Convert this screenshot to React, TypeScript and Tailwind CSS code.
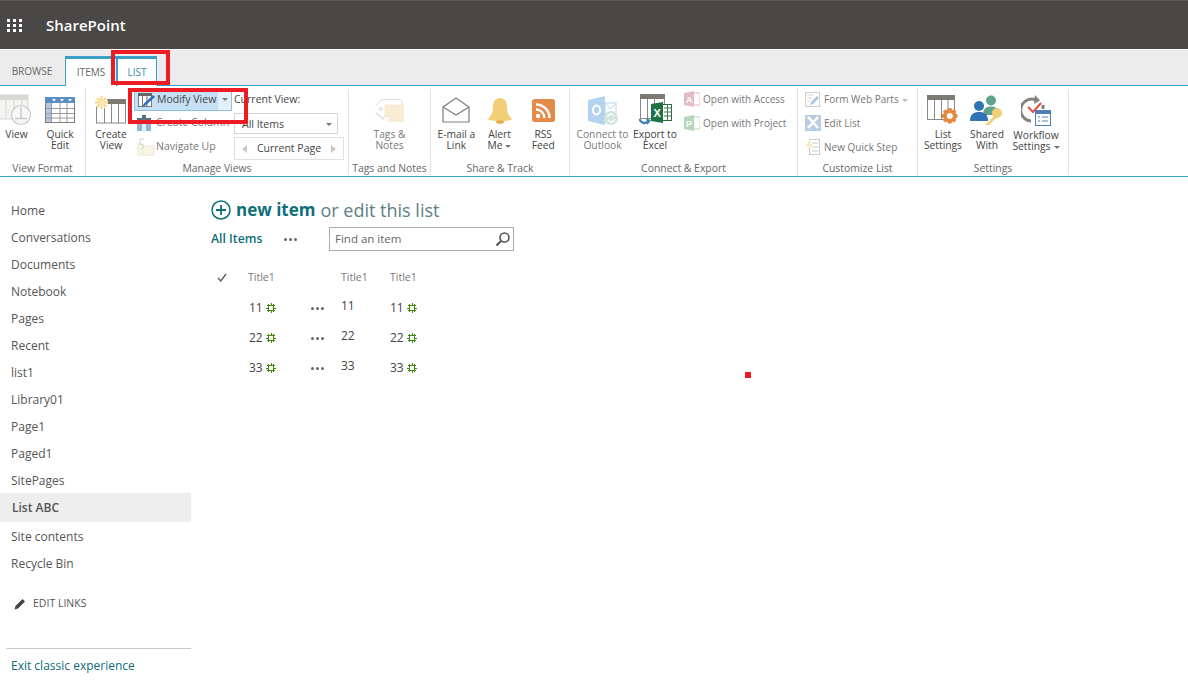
import React from "react";

const F = "font-['Open_Sans','Noto_Sans',sans-serif]";

function Caret({ className = "" }: { className?: string }) {
  return <span className={"inline-block w-0 h-0 border-l-[3px] border-r-[3px] border-t-[3px] border-l-transparent border-r-transparent border-t-[#777] " + className} />;
}

const icons: Record<string, React.ReactNode> = {
  view: (
    <svg width="34" height="32" viewBox="0 0 34 32">
      <rect x="-2" y="1" width="30" height="24" fill="#f4f4f3" stroke="#d8d7d4" />
      <rect x="-2" y="1" width="30" height="5" fill="#d8d7d4" />
      <path d="M6 6V25M14 6V25M22 6V25" stroke="#d8d7d4" />
      <circle cx="21" cy="21" r="9.5" fill="#f7f7f7" stroke="#c9c8c5" strokeWidth="1.2" />
      <path d="M21 13V24M15 24.5H27" stroke="#c9c8c5" strokeWidth="1.4" />
    </svg>
  ),
  quick: (
    <svg width="30" height="26" viewBox="0 0 30 26">
      <rect x="0.5" y="0.5" width="29" height="25" fill="#fff" stroke="#7e7e7e" />
      <rect x="0" y="0" width="30" height="6" fill="#5b8fc4" />
      <rect x="1" y="6" width="5" height="19" fill="#b4c7e4" />
      <path d="M1 11.5H29M1 16.5H29M1 21H29M6.5 6V25M15 6V25M22 6V25" stroke="#9a9a9a" />
      <path d="M7 2h4l-2 2.5zM15 2h4l-2 2.5zM23 2h4l-2 2.5z" fill="#fff" />
    </svg>
  ),
  create: (
    <svg width="32" height="28" viewBox="0 0 32 28">
      <rect x="1.5" y="3.5" width="29" height="23.500" fill="#fff" stroke="#8b8981" />
      <rect x="1" y="3" width="30" height="5" fill="#7b7971" />
      <path d="M9.5 8V27M16.5 8V27M23.5 8V27" stroke="#8b8981" />
      <circle cx="6.500" cy="6.500" r="6.500" fill="#fff" />
      <path d="M6.500 0V13M0 6.500H13M2 2L11 11M11 2L2 11" stroke="#f6d47e" strokeWidth="1.800" />
      <circle cx="6.500" cy="6.500" r="3" fill="#fbe7b0" />
    </svg>
  ),
  tags: (
    <svg width="32" height="25" viewBox="0 0 32 27">
      <path d="M0.5 8.5L7 1.5H26.5C28 1.5 29 2.5 29 4V7M10 22.5H7L0.5 15.5Z" fill="#fff" stroke="#d9d8d5" />
      <circle cx="6" cy="12" r="1.6" fill="none" stroke="#d0cfcc" />
      <path d="M10 7H31V26H16L10 20Z" fill="#f9ecd2" />
      <path d="M10 20H16V26Z" fill="#fff" stroke="#f1e3c5" />
    </svg>
  ),
  mail: (
    <svg width="28" height="26" viewBox="0 0 28 26">
      <path d="M1 10L14 1 27 10V25H1Z" fill="#fff" stroke="#7e7d78" strokeWidth="1.2" />
      <path d="M1 10L14 18 27 10" fill="none" stroke="#7e7d78" strokeWidth="1.2" />
    </svg>
  ),
  bell: (
    <svg width="26" height="27" viewBox="0 0 26 27">
      <path d="M13 1C8 1 6 5 6 10C6 16 4 19 1 21.5C1 23 4 24 13 24C22 24 25 23 25 21.5C22 19 20 16 20 10C20 5 18 1 13 1Z" fill="#f2cf77" />
      <ellipse cx="13" cy="25" rx="4" ry="1.8" fill="#e9a94f" />
    </svg>
  ),
  rss: (
    <svg width="23" height="23" viewBox="0 0 23 23">
      <rect width="23" height="23" rx="2.5" fill="#e68a4a" />
      <circle cx="6" cy="17" r="2.2" fill="#fff" />
      <path d="M4 10.5A8.500 8.500 0 0 1 12.500 19M4 5.500A13.500 13.500 0 0 1 17.500 19" fill="none" stroke="#fff" strokeWidth="2.4" />
    </svg>
  ),
  outlook: (
    <svg width="30" height="31" viewBox="0 0 30 31">
      <path d="M0 5L17 1V30L0 26Z" fill="#b3d3ee" />
      <rect x="17" y="8" width="11" height="11" fill="#fff" stroke="#b3d3ee" />
      <path d="M17 8L22.500 14 28 8" fill="none" stroke="#b3d3ee" />
      <ellipse cx="8.500" cy="15" rx="3.600" ry="4.500" fill="none" stroke="#fff" strokeWidth="2" />
      <circle cx="23" cy="23" r="7" fill="#d2e4de" />
      <path d="M19.500 22a3.500 3.500 0 0 1 6.500-1M26.500 24a3.500 3.500 0 0 1-6.500 1" fill="none" stroke="#fff" strokeWidth="1.300" />
    </svg>
  ),
  excel: (
    <svg width="33" height="32" viewBox="0 0 33 32">
      <rect x="1.500" y="0.500" width="24" height="24" fill="#fff" stroke="#8b8981" />
      <rect x="1" y="0" width="25" height="5" fill="#7b7971" />
      <path d="M8.500 5V25M15.500 5V25" stroke="#8b8981" />
      <rect x="20.500" y="10.500" width="12" height="16" fill="#fff" stroke="#2a6b3f" />
      <path d="M25 14H32M25 18H32M25 22H32M28.500 11V26" stroke="#3b8052" />
      <path d="M12 10L24 8V29L12 27Z" fill="#1f7244" />
      <text x="14.500" y="23" fill="#fff" fontSize="11" fontWeight="700" fontFamily="Liberation Sans">X</text>
      <path d="M0 25C3 30 7 30 10 27" fill="none" stroke="#3f7fbf" strokeWidth="2.400" />
      <path d="M7 24.500L12 26 8.500 31Z" fill="#3f7fbf" />
    </svg>
  ),
  access: (
    <svg width="16" height="16" viewBox="0 0 16 16">
      <rect x="8" y="2" width="8" height="12" fill="#fff" stroke="#e0b7c3" />
      <path d="M0 2L10 0V16L0 14Z" fill="#e3bcc8" />
      <text x="2" y="12" fill="#fff" fontSize="9" fontWeight="700" fontFamily="Liberation Sans">A</text>
    </svg>
  ),
  project: (
    <svg width="16" height="16" viewBox="0 0 16 16">
      <rect x="8" y="2" width="8" height="12" fill="#fff" stroke="#bcd9c0" />
      <path d="M0 2L10 0V16L0 14Z" fill="#b7d6bb" />
      <text x="2" y="12" fill="#fff" fontSize="9" fontWeight="700" fontFamily="Liberation Sans">P</text>
    </svg>
  ),
  modify: (
    <svg width="17" height="16" viewBox="0 0 17 16">
      <rect x="0.500" y="1.500" width="13" height="13" fill="#fff" stroke="#777" />
      <rect x="0" y="1" width="14" height="3" fill="#666" />
      <path d="M4.500 4V15M9 4V15" stroke="#777" />
      <path d="M15 3L6 11.500 4 15 7.500 13.500 17 5Z" fill="#2a72b5" />
    </svg>
  ),
  column: (
    <svg width="14" height="16" viewBox="0 0 14 16">
      <rect x="0" y="3" width="14" height="13" fill="#8fb6d6" />
      <rect x="5" y="3" width="4" height="13" fill="#e6eff6" />
      <rect x="0" y="3" width="14" height="3" fill="#5c6f80" />
      <rect x="5" y="0" width="4" height="3" fill="#5c6f80" />
    </svg>
  ),
  navup: (
    <svg width="18" height="18" viewBox="0 0 18 18">
      <path d="M0 6H6L8 8H17V17H0Z" fill="#faf4e4" stroke="#eee9da" />
      <path d="M3 1H7M3 1V6M3 6C7 6 7 11 4 11" fill="none" stroke="#d3e4d1" strokeWidth="1.300" />
    </svg>
  ),
  webparts: (
    <svg width="15" height="15" viewBox="0 0 15 15">
      <rect x="0.500" y="0.500" width="14" height="14" fill="#fff" stroke="#cfcfcf" />
      <path d="M2 3H9M2 6H7M2 9H5" stroke="#d6d6d6" />
      <path d="M12 4L6 10 5 13 8 12 14 6Z" fill="#a9c6e0" />
    </svg>
  ),
  edit: (
    <svg width="16" height="16" viewBox="0 0 16 16">
      <rect width="16" height="16" fill="#b9cde3" />
      <path d="M3 2L13 13M13 2L3 13" stroke="#fff" strokeWidth="2.600" />
    </svg>
  ),
  quickstep: (
    <svg width="15" height="16" viewBox="0 0 15 16">
      <rect x="4.500" y="0.500" width="10" height="15" fill="#fff" stroke="#c9c9c9" />
      <path d="M7 4H13M7 8H13M7 12H13" stroke="#c9c9c9" />
      <path d="M5 0L1 7H4L2 13 8 5H5Z" fill="#f9e5bb" />
    </svg>
  ),
  listset: (
    <svg width="31" height="31" viewBox="0 0 31 31">
      <rect x="0.500" y="0.500" width="27" height="24" fill="#fff" stroke="#8b8981" />
      <rect x="0" y="0" width="28" height="5" fill="#7b7971" />
      <path d="M7.500 5V25M14.500 5V25M21 5V25" stroke="#8b8981" />
      <path d="M21 13h3.500l.6 2.200 2-.9 2.300 2.300-1 2 2.100.6v3.400l-2.100.6 1 2-2.300 2.300-2-1-.6 2.100H21l-.6-2.100-2 1-2.400-2.300 1-2-2-.6v-3.400l2-.6-1-2 2.400-2.300 2 .9z" fill="#e38a3e" />
      <circle cx="22.800" cy="21" r="3" fill="#fff" />
    </svg>
  ),
  shared: (
    <svg width="34" height="31" viewBox="0 0 34 31">
      <circle cx="21" cy="5.500" r="5" fill="#5fa28e" />
      <path d="M13 20C13 13 17 11.500 21 11.500S29 13 29 20Z" fill="#5fa28e" />
      <circle cx="9" cy="11" r="5" fill="#2f75b5" />
      <path d="M0 26C0 19 4 17 9 17S18 19 18 26Z" fill="#2f75b5" />
      <circle cx="27" cy="18" r="5" fill="#f2cf77" />
      <path d="M24 21L15 30H19L27 22Z" fill="#f2cf77" />
    </svg>
  ),
  workflow: (
    <svg width="30" height="31" viewBox="0 0 30 31">
      <path d="M17 6A11 11 0 1 0 10 26" fill="none" stroke="#85827b" strokeWidth="3" />
      <path d="M14 0L19 5.500 13 9Z" fill="#85827b" />
      <path d="M7 12L12 17 20 8" fill="none" stroke="#e5533d" strokeWidth="2" />
      <rect x="14.500" y="15.500" width="15" height="15" fill="#fff" stroke="#4c7fb5" />
      <rect x="14" y="15" width="16" height="4" fill="#4c7fb5" />
      <path d="M17 22H19M21 22H27M17 26H19M21 26H27" stroke="#4c7fb5" />
      <path d="M22 10V14" stroke="#85827b" strokeWidth="3" />
    </svg>
  ),
};

function Big({ icon, lines, dim, caret, iconH = 35 }: { icon: string; lines: string[]; dim?: boolean; caret?: boolean; iconH?: number }) {
  return (
    <div className={"flex flex-col items-center text-[10.25px] leading-[11px] text-center " + (dim ? "text-[#7a7a7a]" : "text-[#444]")}>
      <div style={{ height: iconH }} className="flex items-center justify-center pb-[3px]">{icons[icon]}</div>
      <div className="whitespace-nowrap">
        {lines.map((l, i) => (
          <React.Fragment key={i}>
            {i > 0 && <br />}
            {l}
          </React.Fragment>
        ))}
        {caret && <Caret className="ml-[3px] mb-[1px]" />}
      </div>
    </div>
  );
}

function Small({ icon, label, caret, narrow, className = "" }: { icon: string; label: string; caret?: boolean; narrow?: boolean; className?: string }) {
  return (
    <div className={"flex items-center h-6 whitespace-nowrap text-[#767676] " + (narrow ? "text-[10px] " : "text-[10.5px] ") + className}>
      <span className="w-[19px] flex items-center justify-start">{icons[icon]}</span>
      {label}
      {caret && <Caret className="ml-[3px] mt-[2px] !border-t-[#bbb]" />}
    </div>
  );
}

function Group({ title, w, children, className = "" }: { title: string; w: number; children: React.ReactNode; className?: string }) {
  return (
    <div style={{ width: w }} className="shrink-0 flex flex-col h-[86px] mt-[3px] border-r border-[#e1e1e1]">
      <div className={"flex-1 min-h-0 " + className}>{children}</div>
      <div className="h-[14px] text-center text-[10.4px] leading-[14px] text-[#666] whitespace-nowrap">{title}</div>
    </div>
  );
}

function Star() {
  return (
    <svg width="10" height="10" viewBox="0 0 10 10" className="ml-[3px]" shapeRendering="crispEdges">
      <path d="M2.500 1V9M7.500 1V9M1 2.500H9M1 7.500H9M5 0V3M5 7V10M0 5H3M7 5H10" stroke="#3f8a0c" strokeWidth="1" fill="none" />
    </svg>
  );
}

function Dots() {
  return (
    <span className="inline-flex gap-[2px]">
      <i className="w-[3px] h-[3px] rounded-full bg-[#666]" />
      <i className="w-[3px] h-[3px] rounded-full bg-[#666]" />
      <i className="w-[3px] h-[3px] rounded-full bg-[#666]" />
    </span>
  );
}

const nav = ["Home", "Conversations", "Documents", "Notebook", "Pages", "Recent", "list1", "Library01", "Page1", "Paged1", "SitePages"];

export default function App() {
  return (
    <div className={F + " relative w-[1188px] h-[680px] overflow-hidden bg-white"}>
      {/* Suite bar */}
      <div className="h-[49px] mb-[1px] bg-[#4a4846] border-t border-[#5c5a58] flex items-center">
        <div className="w-[46px] pl-[7px]">
          <div className="grid grid-cols-3 gap-x-[3px] gap-y-[2px] w-[15px]">
            {Array.from({ length: 9 }).map((_, i) => (
              <i key={i} className="w-[3px] h-[3px] bg-white" />
            ))}
          </div>
        </div>
        <span className="text-white text-[15px] font-semibold">SharePoint</span>
      </div>

      {/* Tabs */}
      <div className="h-[36px] bg-[#ececec] border-b border-[#3aa0c9] flex items-end pl-[1px] text-[10px] text-[#666]">
        <div className="w-[64px] h-[29px] pr-[2px] flex items-center justify-center mb-[-1px]">BROWSE</div>
        <div className="w-[52px] h-[30px] flex items-center justify-center border-t-[3px] border-x border-[#3aa0c9] bg-white mb-[-1px]">ITEMS</div>
        <div className="w-[40px] h-[30px] flex items-center justify-center border-t-[3px] border-x border-[#3aa0c9] border-b border-b-white bg-white text-[#3a8bb5] mb-[-1px]">LIST</div>
      </div>

      {/* Ribbon */}
      <div className="h-[91px] border-b border-[#3aa0c9] flex overflow-hidden">
        <Group title="View Format" w={86} className="flex pt-[5px]">
          <div className="w-[33px] flex justify-center overflow-hidden"><Big icon="view" lines={["View"]} /></div>
          <div className="flex-1 flex justify-center pl-[2px]"><Big icon="quick" lines={["Quick", "Edit"]} /></div>
        </Group>
        <Group title="Manage Views" w={263} className="flex pt-[5px]">
          <div className="w-[50px] flex justify-center"><Big icon="create" lines={["Create", "View"]} /></div>
          <div className="w-[98px] -ml-[2px] -mt-[6px]">
            <div className="flex items-center h-[23px] w-[98px] border border-[#92c0e0] bg-[#c5e0f5] text-[10.5px] text-[#444] whitespace-nowrap">
              <span className="ml-[3px] w-[19px]">{icons.modify}</span>Modify View
              <span className="ml-auto w-[13px] h-full bg-[#e4f0fa] flex items-center justify-center"><Caret /></span>
            </div>
            <Small icon="column" label="Create Column" className="ml-[3px]" />
            <Small icon="navup" label="Navigate Up" className="ml-[3px]" />
          </div>
          <div className="w-[110px] ml-[2px] text-[10.5px] text-[#444] -mt-[6px]">
            <div className="h-[22px] pt-[1px] flex items-center">Current View:</div>
            <div className="h-[21px] w-[104px] border border-[#d5d5d5] flex items-center pl-[7px] pt-[2px] mt-[3px]">
              All Items<Caret className="ml-auto mr-[5px]" />
            </div>
            <div className="h-[23px] w-[110px] border border-[#e0e0e0] flex items-center justify-between px-[7px] mt-[3px]">
              <span className="w-0 h-0 border-y-[4px] border-r-[5px] border-y-transparent border-r-[#c8c8c8]" />
              <span>Current Page</span>
              <span className="w-0 h-0 border-y-[4px] border-l-[5px] border-y-transparent border-l-[#c8c8c8]" />
            </div>
          </div>
        </Group>
        <Group title="Tags and Notes" w={82} className="flex justify-center pt-[5px]">
          <Big icon="tags" lines={["Tags &", "Notes"]} dim />
        </Group>
        <Group title="Share & Track" w={139} className="flex pt-[5px]">
          <div className="w-[51px] flex justify-center"><Big icon="mail" lines={["E-mail a", "Link"]} /></div>
          <div className="w-[36px] flex justify-center"><Big icon="bell" lines={["Alert", "Me"]} caret /></div>
          <div className="w-[52px] flex justify-center"><Big icon="rss" lines={["RSS", "Feed"]} /></div>
        </Group>
        <Group title="Connect & Export" w={228} className="flex pt-[5px]">
          <div className="w-[65px] flex justify-center"><Big icon="outlook" lines={["Connect to", "Outlook"]} dim /></div>
          <div className="w-[40px] flex justify-center"><Big icon="excel" lines={["Export to", "Excel"]} /></div>
          <div className="ml-[9px] -mt-[7px]">
            <Small icon="access" label="Open with Access" narrow />
            <Small icon="project" label="Open with Project" narrow />
          </div>
        </Group>
        <Group title="Customize List" w={120} className="pl-[7px] -mt-[2px]">
          <Small icon="webparts" label="Form Web Parts" caret narrow />
          <Small icon="edit" label="Edit List" narrow />
          <Small icon="quickstep" label="New Quick Step" narrow />
        </Group>
        <Group title="Settings" w={151} className="flex pt-[5px]">
          <div className="w-[50px] flex justify-center"><Big icon="listset" lines={["List", "Settings"]} /></div>
          <div className="w-[38px] flex justify-center"><Big icon="shared" lines={["Shared", "With"]} /></div>
          <div className="w-[60px] flex justify-center"><Big icon="workflow" lines={["Workflow", "Settings"]} caret iconH={36} /></div>
        </Group>
      </div>

      {/* Body */}
      <div className="flex">
        <nav className="w-[191px] shrink-0 pt-[20px] text-[12px] text-[#555]">
          {nav.map((n) => (
            <div key={n} className="h-[27px] pl-[11px] flex items-center">{n}</div>
          ))}
          <div className="h-[29px] mt-[-1px] bg-[#eeeeee] pl-[12px] flex items-center font-semibold text-[#555]">List ABC</div>
          <div className="h-[27px] pl-[11px] flex items-center mt-[1px]">Site contents</div>
          <div className="h-[27px] pl-[11px] flex items-center">Recycle Bin</div>
          <div className="h-[27px] mt-[13px] pl-[14px] flex items-center text-[10.5px] text-[#555]">
            <svg width="12" height="12" viewBox="0 0 12 12" className="mr-[7px]">
              <path d="M0.500 11.500L1.500 8 8.500 1 11 3.500 4 10.500Z" fill="#444" />
            </svg>
            EDIT LINKS
          </div>
          <div className="ml-[6px] mt-[31px] border-t border-[#c8c8c8] h-[35px] pl-[5px] flex items-center text-[#0f6b78]">Exit classic experience</div>
        </nav>

        <main className="pl-[20px] pt-[20px]">
          <div className="flex items-center h-[26px]">
            <svg width="20" height="20" viewBox="0 0 20 20">
              <circle cx="10" cy="10" r="9" fill="none" stroke="#0f6f78" strokeWidth="1.500" />
              <path d="M10 5V15M5 10H15" stroke="#0f6f78" strokeWidth="1.800" />
            </svg>
            <span className="ml-[5px] text-[17px] font-bold text-[#0f6f78]">new item</span>
            <span className="ml-[5px] text-[18px] text-[#5a7f86]">or edit this list</span>
          </div>
          <div className="flex items-center mt-[4px] h-[24px]">
            <span className="text-[12.25px] font-semibold text-[#0f6f78] w-[73px]">All Items</span>
            <Dots />
            <div className="ml-[32px] w-[185px] h-[24px] border border-[#ababab] flex items-center pl-[5px] pr-[2px] text-[11.5px] text-[#666]">
              Find an item
              <svg width="16" height="16" viewBox="0 0 16 16" className="ml-auto">
                <circle cx="9.500" cy="6.500" r="4.500" fill="none" stroke="#555" strokeWidth="1.600" />
                <path d="M6 10L1.500 14.500" stroke="#555" strokeWidth="2.200" />
              </svg>
            </div>
          </div>
          <div className="grid grid-cols-[37px_63px_30px_49px_60px] mt-[12px] text-[12px] text-[#444] items-center">
            <div className="h-[30px] flex items-center pl-[6px] -mt-[2px]">
              <svg width="10" height="9" viewBox="0 0 10 9"><path d="M1 5L3.800 8 9 1" fill="none" stroke="#666" strokeWidth="1.500" /></svg>
            </div>
            <div className="h-[30px] flex items-center text-[10.5px] text-[#777]">Title1</div>
            <div />
            <div className="h-[30px] flex items-center text-[10.5px] text-[#777]">Title1</div>
            <div className="h-[30px] flex items-center text-[10.5px] text-[#777]">Title1</div>
            {["11", "22", "33"].map((v) => (
              <React.Fragment key={v}>
                <div className="h-[30px]" />
                <div className="h-[30px] flex items-center pl-[1px] pb-[1px]">{v}<Star /></div>
                <div className="h-[30px] flex items-center"><Dots /></div>
                <div className="h-[30px] flex items-center pb-[5px]">{v}</div>
                <div className="h-[30px] flex items-center pb-[1px]">{v}<Star /></div>
              </React.Fragment>
            ))}
          </div>
        </main>
      </div>

      {/* Annotation overlays */}
      <div className="absolute left-[111px] top-[50px] w-[59px] h-[35px] border-[4px] border-[#ed1c24]" />
      <div className="absolute left-[128px] top-[88px] w-[120px] h-[36px] border-[4px] border-[#ed1c24]" />
      <div className="absolute left-[745px] top-[372px] w-[6px] h-[6px] bg-[#ed1c24]" />
    </div>
  );
}
